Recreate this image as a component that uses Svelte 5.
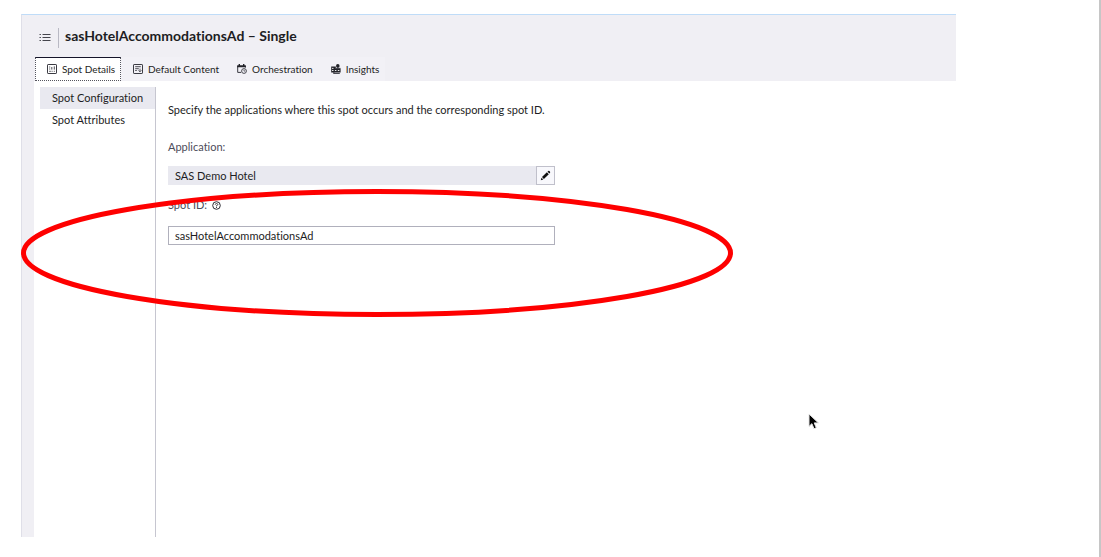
<script>
  let activeTab = $state('details');
  let activeSection = $state('configuration');
  let spotId = $state('sasHotelAccommodationsAd');
  const application = 'SAS Demo Hotel';

  const tabs = [
    { id: 'details', label: 'Spot Details' },
    { id: 'content', label: 'Default Content' },
    { id: 'orchestration', label: 'Orchestration' },
    { id: 'insights', label: 'Insights' }
  ];
  const sections = [
    { id: 'configuration', label: 'Spot Configuration' },
    { id: 'attributes', label: 'Spot Attributes' }
  ];
</script>

<div class="page">
  <main class="frame">
    <header>
      <div class="title-row">
        <button class="menu" aria-label="Open list">
          <svg width="12" height="10" viewBox="0 0 12 10" fill="none" stroke="#44444c">
            <path d="M3.5 1.5H11.5M3.5 4.5H11.5M3.5 7.5H11.5" />
            <path d="M0.5 1.5h1.4M0.5 4.5h1.4M0.5 7.5h1.4" />
          </svg>
        </button>
        <h1>sasHotelAccommodationsAd – Single</h1>
      </div>
      <div class="tabs" role="tablist">
        {#each tabs as tab}
          <button
            class="tab"
            class:active={activeTab === tab.id}
            role="tab"
            aria-selected={activeTab === tab.id}
            onclick={() => (activeTab = tab.id)}
          >
            <svg width="10" height="10" viewBox="0 0 10 10" fill="none" stroke="#3a3a42">
              {#if tab.id === 'details'}
                <rect x="0.5" y="0.5" width="9" height="9" rx="0.6" />
                <path d="M2.2 3h1M2.2 5h1M2.2 7.3h1.6M4.8 3v2.6M7.3 2.4v3.2M4.6 7.3h1M6.8 7.3h1" stroke-width="0.9" />
              {:else if tab.id === 'content'}
                <rect x="0.5" y="0.5" width="9" height="9" rx="0.6" />
                <path d="M2.2 2.7h5.6M2.2 4.7h3.6M2.2 6.5h1.6" stroke-width="0.9" />
                <path d="M7 4.6v3M5.4 6.3l1.6 1.5 1.4-1.5" stroke-width="0.8" />
              {:else if tab.id === 'orchestration'}
                <path d="M0.7 2v6.4h3.4M8.4 2v1.6" />
                <path d="M0.2 1.2h8.6v2H0.2zM1.6 0h1.4v2H1.6zM6 0h1.4v2H6z" fill="#222228" stroke="none" />
                <circle cx="7" cy="7" r="2.4" stroke-width="0.9" />
                <path d="M7 5.6v1.5h1.2" stroke-width="0.7" />
              {:else}
                <path d="M0.2 2.6h4.6v2.2h4.8v3.6H0.2z" fill="#222228" stroke="none" />
                <circle cx="6.8" cy="1.9" r="1.8" fill="#222228" stroke="none" />
                <path d="M4.6 4.4h4.9M6.8 3v2M2.4 9.4h6.4M2.9 8v1.6" />
                <path d="M1 4.4h1.5M1 6.5h1.5M3.9 6.5h1.5M6.8 6.5h1.6" stroke="#fff" stroke-width="0.9" />
              {/if}
            </svg>
            <span>{tab.label}</span>
          </button>
        {/each}
      </div>
    </header>

    <div class="body">
      <nav aria-label="Spot sections">
        {#each sections as section}
          <button
            class="section"
            class:selected={activeSection === section.id}
            onclick={() => (activeSection = section.id)}>{section.label}</button>
        {/each}
      </nav>

      <form onsubmit={(e) => e.preventDefault()}>
        <p>Specify the applications where this spot occurs and the corresponding spot ID.</p>

        <label for="application">Application:</label>
        <div class="picker">
          <input id="application" value={application} readonly />
          <button type="button" class="edit" aria-label="Edit application">
            <svg width="11" height="11" viewBox="0 0 11 11" fill="#111">
              <path d="M0.8 10.2 1.5 7.7 3.3 9.5z" />
              <path d="M2 7.1 6.9 2.3 8.8 4.2 3.9 9z" />
              <path d="M7.5 1.7 8.3 0.9Q9 0.4 9.7 1.2T10.1 2.8L9.4 3.6z" />
            </svg>
          </button>
        </div>

        <div class="label-row">
          <label for="spot-id">Spot ID:</label>
          <svg width="9" height="9" viewBox="0 0 9 9" fill="none" stroke="#2c2c34" role="img" aria-label="Help">
            <circle cx="4.5" cy="4.5" r="3.8" />
            <path d="M3.2 3.7Q3.3 2.5 4.5 2.5T5.8 3.6Q5.8 4.3 4.5 4.6V5.4M4.5 6v1" stroke-width="0.9" />
          </svg>
        </div>
        <input id="spot-id" class="text-box" bind:value={spotId} />
      </form>
    </div>
  </main>

  <svg class="highlight" width="712" height="128" viewBox="0 0 712 128" aria-hidden="true">
    <ellipse cx="356" cy="64" rx="353.5" ry="61.5" fill="none" stroke="#fe0000" stroke-width="5" />
  </svg>
  <svg class="pointer" width="12" height="18" viewBox="0 0 12 18" aria-hidden="true">
    <path d="M1 1v12.4l2.9-2.7 2.1 5 2.3-1-2.1-4.8h4.2z" fill="#000" stroke="#e4e4e4" stroke-width="1" />
  </svg>
</div>

<style>
  :global(body) {
    margin: 0;
    background: #fff;
  }
  .page {
    position: relative;
    box-sizing: border-box;
    display: flex;
    min-height: 100vh;
    padding: 14px 143px 20px 21px;
    border-right: 2px solid #c6c6c6;
    font-family: Lato, 'Liberation Sans', sans-serif;
    font-size: 11px;
    line-height: 16px;
    font-variant-ligatures: none;
    color: #1d1d23;
  }
  button,
  input {
    margin: 0;
    font: inherit;
    font-variant-ligatures: none;
    color: inherit;
    border-radius: 0;
  }
  .frame {
    flex: 1;
    min-width: 0;
    display: flex;
    flex-direction: column;
    box-sizing: border-box;
    border-top: 1px solid #bfdcf8;
    border-left: 1px solid #dfdfe8;
    background: #f0eff4;
  }
  header {
    padding: 13px 12px 0 13px;
  }
  .title-row {
    display: flex;
    align-items: flex-start;
    height: 20px;
    margin-bottom: 9px;
  }
  .menu {
    display: flex;
    align-items: center;
    height: 20px;
    padding: 0 7px 0 4px;
    border: 0;
    border-right: 1px solid #b9b9c4;
    background: none;
  }
  h1 {
    margin: 0;
    padding-left: 6px;
    font-size: 14px;
    line-height: 16px;
    font-weight: 700;
    white-space: nowrap;
  }
  .tabs {
    display: flex;
    height: 24px;
  }
  .tab {
    display: flex;
    align-items: center;
    gap: 5px;
    padding: 0 5px 0 11px;
    border: 1px solid transparent;
    background: #f2f1f6;
    font-size: 10px;
    white-space: nowrap;
  }
  .tab svg {
    flex: none;
  }
  .tab.active {
    border: 1px dotted #55555f;
    border-top: 1px solid #15152a;
    background: #fff;
  }
  .body {
    flex: 1;
    display: flex;
    margin-left: 12px;
    padding-top: 6px;
    background: #fff;
  }
  nav {
    flex: none;
    width: 115px;
    margin-left: 6px;
    border-right: 1px solid #c6c6d0;
  }
  .section {
    display: block;
    width: 100%;
    height: 22px;
    padding: 0 0 0 12px;
    border: 0;
    background: none;
    text-align: left;
    white-space: nowrap;
  }
  .section.selected {
    background: #e9e9f0;
  }
  form {
    flex: 1;
    padding: 15px 12px;
  }
  p {
    margin: 0 0 21px;
  }
  label {
    color: #4c4c5a;
  }
  form > label {
    display: block;
  }
  .picker {
    display: flex;
    box-sizing: border-box;
    max-width: 387px;
    height: 19px;
    margin: 11px 0 12px;
  }
  input {
    box-sizing: border-box;
    min-width: 0;
    padding: 0 6px;
    outline: 0;
  }
  .picker input {
    flex: 1;
    border: 0;
    padding-left: 7px;
    background: #e9e9f0;
  }
  .edit {
    display: flex;
    align-items: center;
    justify-content: center;
    width: 19px;
    padding: 0;
    border: 1px solid #c0c0cb;
    background: #f8f8fc;
  }
  .label-row {
    display: flex;
    align-items: center;
    gap: 5px;
    margin-bottom: 13px;
  }
  .text-box {
    display: block;
    width: 100%;
    max-width: 387px;
    height: 19px;
    border: 1px solid #b0b0bc;
    background: #fff;
  }
  .highlight,
  .pointer {
    position: absolute;
    pointer-events: none;
  }
  .highlight {
    left: 21px;
    top: 189px;
  }
  .pointer {
    left: 808px;
    top: 413px;
  }
</style>
